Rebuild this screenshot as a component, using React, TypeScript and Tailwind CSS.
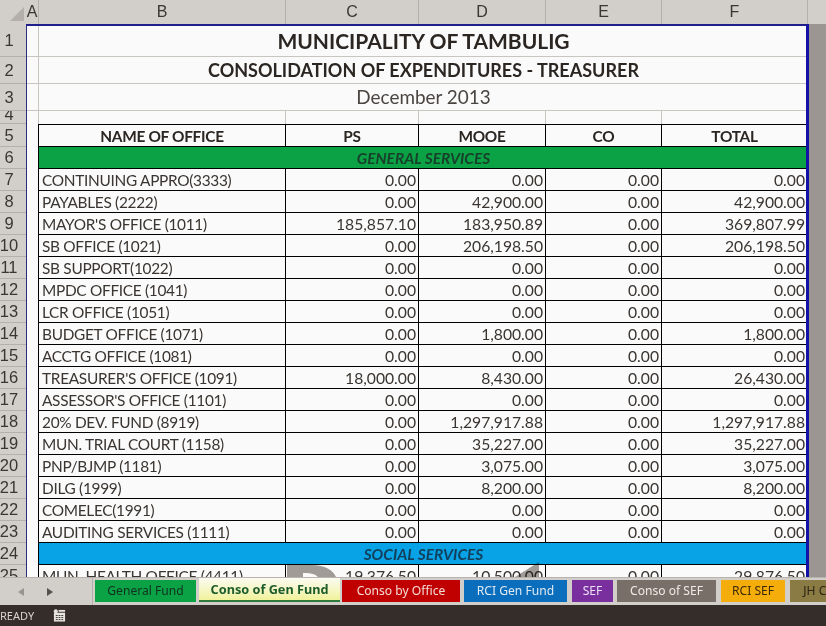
const gridCols = "grid grid-cols-[26px_13px_247px_133px_127px_116px_146px_18px]";

const offices = [
  ["CONTINUING APPRO(3333)", "0.00", "0.00", "0.00", "0.00"],
  ["PAYABLES (2222)", "0.00", "42,900.00", "0.00", "42,900.00"],
  ["MAYOR'S OFFICE (1011)", "185,857.10", "183,950.89", "0.00", "369,807.99"],
  ["SB OFFICE (1021)", "0.00", "206,198.50", "0.00", "206,198.50"],
  ["SB SUPPORT(1022)", "0.00", "0.00", "0.00", "0.00"],
  ["MPDC OFFICE (1041)", "0.00", "0.00", "0.00", "0.00"],
  ["LCR OFFICE (1051)", "0.00", "0.00", "0.00", "0.00"],
  ["BUDGET OFFICE (1071)", "0.00", "1,800.00", "0.00", "1,800.00"],
  ["ACCTG OFFICE (1081)", "0.00", "0.00", "0.00", "0.00"],
  ["TREASURER'S OFFICE (1091)", "18,000.00", "8,430.00", "0.00", "26,430.00"],
  ["ASSESSOR'S OFFICE (1101)", "0.00", "0.00", "0.00", "0.00"],
  ["20% DEV. FUND (8919)", "0.00", "1,297,917.88", "0.00", "1,297,917.88"],
  ["MUN. TRIAL COURT (1158)", "0.00", "35,227.00", "0.00", "35,227.00"],
  ["PNP/BJMP (1181)", "0.00", "3,075.00", "0.00", "3,075.00"],
  ["DILG (1999)", "0.00", "8,200.00", "0.00", "8,200.00"],
  ["COMELEC(1991)", "0.00", "0.00", "0.00", "0.00"],
  ["AUDITING SERVICES (1111)", "0.00", "0.00", "0.00", "0.00"],
];

const tabs = [
  { name: "General Fund", cls: "w-[101px] h-[22px] text-[12.1px] bg-[#0ba246] text-[#12301f]" },
  { name: "Conso of Gen Fund", cls: "ml-[3px] -mt-[2px] w-[141px] h-[24px] text-[12.7px] bg-gradient-to-b from-[#fbfbf0] to-[#f1f29a] text-[#1d5c2c] font-bold border-b-2 border-[#2f7a3c]" },
  { name: "Conso by Office", cls: "ml-[2px] w-[118px] h-[22px] text-[12.1px] bg-[#c00000] text-[#f3dcd8]" },
  { name: "RCI Gen Fund", cls: "ml-[4px] w-[103px] h-[22px] text-[12.1px] bg-[#0a6ebd] text-[#dfe9f2]" },
  { name: "SEF", cls: "ml-[5px] w-[41px] h-[22px] text-[12.1px] bg-[#7a2f9f] text-[#ecdff2]" },
  { name: "Conso of SEF", cls: "ml-[4px] w-[99px] h-[22px] text-[12.1px] bg-[#787068] text-[#efeae5]" },
  { name: "RCI SEF", cls: "ml-[5px] w-[64px] h-[22px] text-[12.1px] bg-[#f5ad0c] text-[#3d2a08]" },
  { name: "JH CONSO", cls: "ml-[5px] w-[84px] h-[22px] text-[12.1px] bg-[#8a7a44] text-[#2b2412]" },
];

function RowHead({ n }: { n: number }) {
  return (
    <div className="flex items-center justify-center pr-[8px] bg-[#d2cec9] border-b border-[#b5b0ab] text-[#3a3632] text-[16.5px] font-['Liberation_Sans',sans-serif] overflow-hidden">
      {n}
    </div>
  );
}

function TitleRow({ n, h, cls, text }: { n: number; h: string; cls: string; text: string }) {
  return (
    <div className={`${gridCols} ${h}`}>
      <RowHead n={n} />
      <div className="border-r border-b border-[#c9c5c1] bg-[#fafafa]" />
      <div className={`col-span-5 flex items-center justify-center border-b border-[#c9c5c1] bg-[#fafafa] text-[#2b2622] ${cls}`}>
        {text}
      </div>
      <div className="bg-[#9c9692]" />
    </div>
  );
}

function BandRow({ n, text, cls }: { n: number; text: string; cls: string }) {
  return (
    <div className={`${gridCols} h-[22px]`}>
      <RowHead n={n} />
      <div className="bg-[#fafafa] border-r border-black" />
      <div className={`col-span-5 flex items-center justify-center pt-[2px] border-b border-black font-bold italic text-[15.5px] ${cls}`}>
        {text}
      </div>
      <div className="bg-[#9c9692]" />
    </div>
  );
}

function DataRow({ n, row }: { n: number; row: string[] }) {
  return (
    <div className={`${gridCols} h-[22px]`}>
      <RowHead n={n} />
      <div className="bg-[#fafafa] border-r border-black" />
      <div className="flex items-center pl-[3px] pt-[2px] border-r border-b border-black bg-[#fafafa] whitespace-nowrap text-[15.4px] tracking-[-0.3px] text-[#3a3531]">{row[0]}</div>
      {row.slice(1).map((v, i) => (
        <div key={i} className="flex items-center justify-end pr-[2px] pt-[2px] border-r border-b border-black bg-[#fafafa] text-[#3a3531]">
          {v}
        </div>
      ))}
      <div className="bg-[#9c9692]" />
    </div>
  );
}

export default function App() {
  return (
    <div className="relative flex h-[626px] w-[826px] flex-col overflow-hidden bg-[#fafafa] font-['Lato','Liberation_Sans',sans-serif] text-[15.7px] leading-none text-[#2b2622]">
      {/* Column headers */}
      <div className={`${gridCols} h-[24px] shrink-0 bg-[#d2cec9] text-[#3a3632] text-[16px] font-['Liberation_Sans',sans-serif]`}>
        <div className="relative">
          <svg className="absolute right-[2px] bottom-[3px]" width="14" height="14" viewBox="0 0 14 14">
            <polygon points="14,0 14,14 0,14" fill="#b4afaa" />
          </svg>
        </div>
        {["A", "B", "C", "D", "E", "F"].map((c) => (
          <div key={c} className="flex items-center justify-center border-r border-[#b5b0ab]">
            {c}
          </div>
        ))}
        <div />
      </div>

      {/* Sheet */}
      <div className="h-[553px] shrink-0 overflow-hidden">
        <TitleRow n={1} h="h-[33px]" cls="text-[21px] font-bold" text="MUNICIPALITY OF TAMBULIG" />
        <TitleRow n={2} h="h-[27px]" cls="text-[18px] font-bold" text="CONSOLIDATION OF EXPENDITURES - TREASURER" />
        <TitleRow n={3} h="h-[27px]" cls="text-[18.9px] text-[#4a4541]" text="December 2013" />

        <div className={`${gridCols} h-[13px]`}>
          <div className="flex items-start justify-center pr-[8px] bg-[#d2cec9] border-b border-[#b5b0ab] text-[#3a3632] text-[16.5px] font-['Liberation_Sans',sans-serif] overflow-hidden">
            <span className="-mt-[5px]">4</span>
          </div>
          <div className="bg-[#fafafa] border-r border-[#c9c5c1]" />
          <div className="bg-[#fafafa] border-r border-[#c9c5c1]" />
          <div className="bg-[#fafafa] border-r border-[#c9c5c1]" />
          <div className="bg-[#fafafa] border-r border-[#c9c5c1]" />
          <div className="bg-[#fafafa] border-r border-[#c9c5c1]" />
          <div className="bg-[#fafafa]" />
          <div className="bg-[#9c9692]" />
        </div>

        <div className={`${gridCols} h-[23px]`}>
          <RowHead n={5} />
          <div className="bg-[#fafafa] border-r border-black" />
          {["NAME OF OFFICE", "PS", "MOOE", "CO", "TOTAL"].map((h) => (
            <div key={h} className="flex items-center justify-center pt-[2px] border-t border-b border-r border-black bg-[#fafafa] font-bold text-[15.4px] tracking-[-0.3px]">
              {h}
            </div>
          ))}
          <div className="bg-[#9c9692]" />
        </div>

        <BandRow n={6} text="GENERAL SERVICES" cls="bg-[#0ba246] text-[#17402a]" />
        {offices.map((row, i) => (
          <DataRow key={row[0]} n={i + 7} row={row} />
        ))}
        <BandRow n={24} text="SOCIAL SERVICES" cls="bg-[#07a3e6] text-[#123f5a]" />
        <DataRow n={25} row={["MUN. HEALTH OFFICE (4411)", "19,376.50", "10,500.00", "0.00", "29,876.50"]} />
      </div>

      {/* Selection outline */}
      <div className="pointer-events-none absolute left-[26px] top-[24px] h-[553px] w-[783px] border-t-2 border-l border-r-[3px] border-t-[#1f1f8c] border-l-[#2b2b80] border-r-[#1212a8]" />

      {/* Watermark peeking out above the tabs */}
      <svg className="pointer-events-none absolute left-[285px] top-[558px] mix-blend-multiply" width="260" height="19" viewBox="0 0 260 19">
        <path d="M2 7 H27 C40 7 48 12 51 19 H33 C30 16 26 15 21 15 H18 V19 H2 Z" fill="#a39e99" />
        <polygon points="230,19 254,4 254,19" fill="#a39e99" />
      </svg>

      {/* Sheet tabs */}
      <div className="flex h-[28px] shrink-0 items-stretch border-t border-[#b8b3ae] bg-[#d2cec9]">
        <div className="flex w-[93px] shrink-0 items-center border-r border-[#b5b0ab] pl-[18px] gap-[23px]">
          <svg width="6" height="8" viewBox="0 0 6 8"><polygon points="6,0 6,8 0,4" fill="#9a9590" /></svg>
          <svg width="6" height="8" viewBox="0 0 6 8"><polygon points="0,0 0,8 6,4" fill="#55504c" /></svg>
        </div>
        <div className="flex items-start pl-[2px] pt-[2px]">
          {tabs.map((t) => (
            <div key={t.name} className={`flex shrink-0 items-center justify-center whitespace-nowrap font-['Noto_Sans',sans-serif] ${t.cls}`}>
              {t.name}
            </div>
          ))}
        </div>
      </div>

      {/* Status bar */}
      <div className="flex h-[21px] shrink-0 items-center bg-[#352d2a] text-[11px] text-[#d8d4d0] font-['Noto_Sans',sans-serif]">
        <span className="w-[53px]">READY</span>
        <svg width="13" height="13" viewBox="0 0 14 14" fill="none">
          <circle cx="3" cy="2.5" r="2.2" fill="#e8e4e0" />
          <rect x="1" y="4" width="12" height="9.5" fill="#e8e4e0" />
          <rect x="6" y="1" width="7" height="2" fill="#e8e4e0" />
          <path d="M3 7h2M6 7h2M9 7h2M3 9.2h2M6 9.2h2M9 9.2h2M3 11.4h2M6 11.4h2M9 11.4h2" stroke="#352d2a" strokeWidth="1" />
        </svg>
      </div>
    </div>
  );
}
